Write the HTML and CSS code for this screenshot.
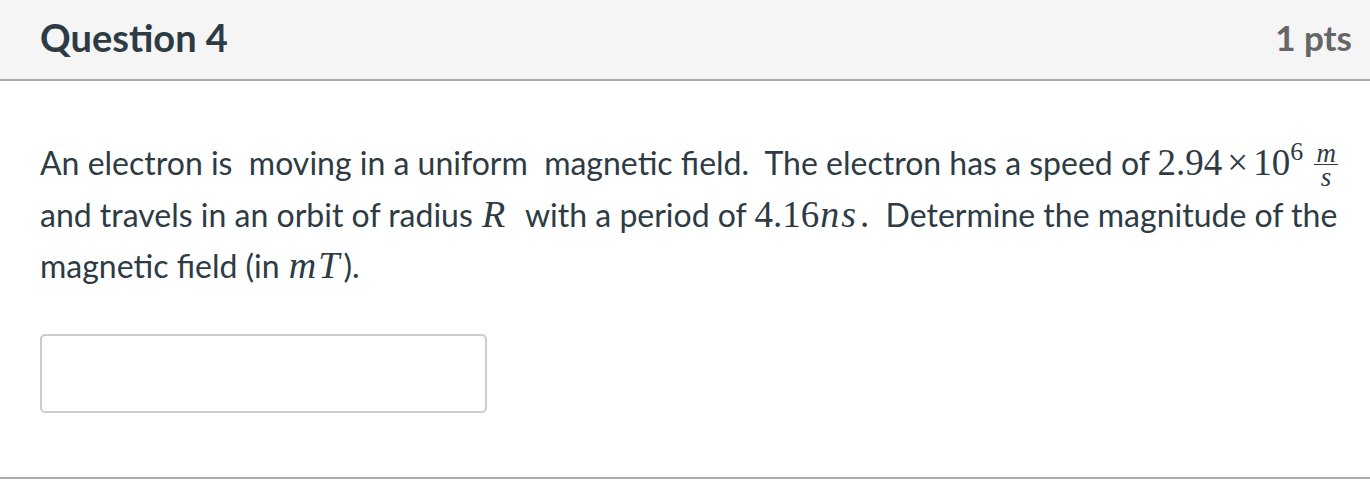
FILE: index.html
```html
<!DOCTYPE html>
<html>
<head>
<meta charset="utf-8">
<link rel="stylesheet" href="styles.css">
</head>
<body>
<div class="question">
  <div class="header">
    <h2 class="title">Question 4</h2>
    <div class="pts">1 pts</div>
  </div>
  <div class="content">
    <p class="text">An electron is&nbsp; moving in a uniform&nbsp; magnetic field.&nbsp; The electron has a speed of <span class="num">2.94</span><span class="op">×</span><span class="num">10</span><sup class="sup">6</sup> <span class="frac"><span class="fnum">m</span><span class="fden">s</span></span> and travels in an orbit of radius <span class="mi">R</span> &nbsp;with a period of <span class="num">4.16</span><span class="mi">ns</span><span class="num">.</span>&nbsp; Determine the magnitude of the magnetic field (in <span class="mi">mT</span>).</p>
    <div class="answer"><input class="input" type="text"></div>
  </div>
</div>
</body>
</html>
```
FILE: styles.css
```css
html, body {
  margin: 0;
  padding: 0;
  background: #ffffff;
}
body {
  font-family: Lato, "Noto Sans", sans-serif;
  color: #2d3b45;
}
.question {
  width: 1370px;
  border-bottom: 2px solid #aaaaaa;
  height: 479px;
  box-sizing: border-box;
}
.header {
  display: flex;
  align-items: center;
  justify-content: space-between;
  height: 81px;
  box-sizing: border-box;
  background: #f5f5f5;
  border-bottom: 2px solid #aaaaaa;
  padding: 0 18px 6px 40px;
}
.title {
  margin: 0;
  font-size: 38px;
  font-weight: 700;
  color: #2d3b45;
}
.pts {
  font-size: 35px;
  font-weight: 700;
  color: #666666;
}
.content {
  padding: 56px 18px 0 40px;
}
.text {
  margin: 0;
  font-size: 32px;
  line-height: 51px;
  width: 1310px;
}
.num, .op, .mi, .sup, .frac {
  font-family: "Liberation Serif", "DejaVu Serif", serif;
  line-height: 1;
  font-weight: 400;
}
.num, .op {
  font-size: 37px;
}
.op {
  padding: 0 5px;
}
.mi {
  font-style: italic;
  font-size: 38px;
  letter-spacing: 2px;
  padding: 0 2px 0 1px;
}
.sup {
  font-size: 26px;
  vertical-align: 15px;
}
.frac {
  display: inline-block;
  vertical-align: -11px;
  font-style: italic;
  font-size: 27px;
  margin-left: 3px;
  text-align: center;
}
.fnum {
  display: block;
  border-bottom: 1.5px solid #2d3b45;
  padding: 0 2px 1px;
  line-height: 20px;
}
.fden {
  display: block;
  line-height: 24px;
}
.answer {
  margin-top: 43px;
}
.input {
  display: block;
  width: 447px;
  height: 79px;
  box-sizing: border-box;
  border: 2px solid #cccccc;
  border-radius: 5px;
  background: #fff;
  margin: 0;
}
```
